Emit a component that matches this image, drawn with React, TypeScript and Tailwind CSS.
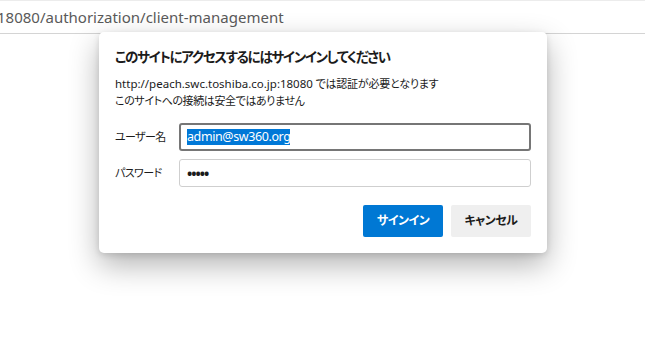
import React from 'react';

const FONT = "font-['Segoe_UI','Noto_Sans','Noto_Sans_CJK_JP',sans-serif] [font-feature-settings:'palt']";

const Field: React.FC<{ label: string; focused?: boolean; children: React.ReactNode }> = ({ label, focused, children }) => (
  <div className="flex items-center">
    <span className="w-[64px] shrink-0 text-[11px] tracking-[-0.6px] text-[#1b1b1b]">{label}</span>
    <div
      className={
        focused
          ? 'flex h-[28px] min-w-0 flex-1 items-center rounded-[3px] border-2 border-[#767676] px-[6px]'
          : 'flex h-[28px] min-w-0 flex-1 items-center rounded-[3px] border border-[#cfcfcf] px-[7px]'
      }
    >
      {children}
    </div>
  </div>
);

export default function App() {
  return (
    <div className={`relative h-[353px] w-[645px] overflow-hidden bg-white ${FONT}`}>
      {/* address bar */}
      <div className="flex h-[34px] items-center border-t border-b border-t-[#ececec] border-b-[#d4d4d4] bg-white">
        <span className="ml-[-3px] whitespace-nowrap text-[15px] text-[#5a5a5a]">
          18080/authorization/client-management
        </span>
      </div>

      {/* sign-in dialog */}
      <div className="absolute left-[99px] top-[32px] w-[448px] rounded-[5px] bg-white px-[16px] pt-[15px] pb-[16px] shadow-[0_12px_30px_rgba(0,0,0,0.3),0_2px_6px_rgba(0,0,0,0.12)]">
        <h1 className="text-[13.5px] leading-[20px] font-semibold tracking-[-1.3px] text-[#1b1b1b]">
          このサイトにアクセスするにはサインインしてください
        </h1>
        <div className="mt-[8px] text-[11px] leading-[17px] text-[#1b1b1b]">
          <p>
            <span className="text-[11.5px]">http://peach.swc.toshiba.co.jp:18080</span>
            <span className="tracking-[-0.2px]"> では認証が必要となります</span>
          </p>
          <p className="tracking-[-0.4px]">このサイトへの接続は安全ではありません</p>
        </div>

        <div className="mt-[14px] flex flex-col gap-[8px]">
          <Field label="ユーザー名" focused>
            <span className="bg-[#0078d7] text-[12.5px] leading-[16px] tracking-[-0.4px] text-white">admin@sw360.org</span>
          </Field>
          <Field label="パスワード">
            <span className="text-[14px] font-bold tracking-[-1px] text-[#1b1b1b]">•••••</span>
          </Field>
        </div>

        <div className="mt-[18px] flex justify-end gap-[8px]">
          <button className="h-[32px] w-[80px] rounded-[2px] bg-[#0078d4] text-[12px] font-semibold tracking-[-0.5px] text-white">
            サインイン
          </button>
          <button className="h-[32px] w-[80px] rounded-[2px] bg-[#efefef] text-[12px] font-semibold tracking-[-0.5px] text-[#1b1b1b]">
            キャンセル
          </button>
        </div>
      </div>
    </div>
  );
}
